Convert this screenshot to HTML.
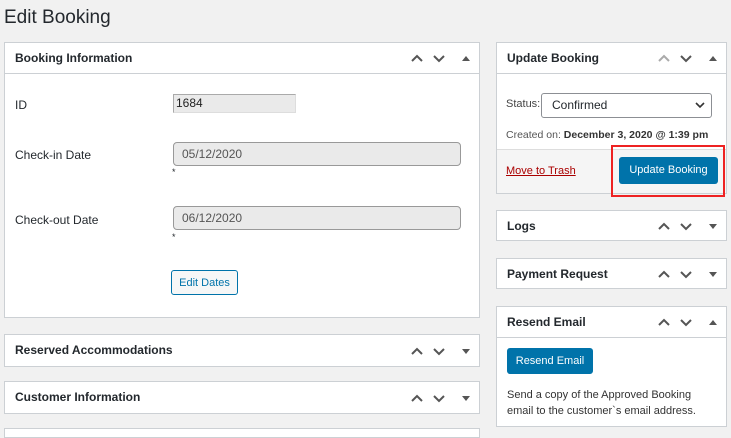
<!DOCTYPE html><html><head><style>
body{margin:0;width:731px;height:430px;background:#f1f1f1;font-family:"Liberation Sans",sans-serif;color:#23282d;position:relative;overflow:hidden;font-size:12px}
.a{position:absolute;white-space:nowrap}
.box{position:absolute;background:#fff;border:1px solid #ccd0d4;box-sizing:border-box}
.hd{position:absolute;left:0;right:0;top:0;height:30px;border-bottom:1px solid #ccd0d4;font-size:12px;font-weight:bold;line-height:30px;padding-left:10px;color:#23282d}
.in{position:absolute;background:#eaeaea;border:1px solid #999;border-radius:4px;box-sizing:border-box;color:#555;padding-left:8px;font-size:12px}
.btn{position:absolute;background:#0073aa;color:#fff;border-radius:3px;text-align:center;font-size:11px}
</style></head><body>
<div class="a" style="left:4px;top:7px;font-size:19px;">Edit Booking</div>

<div class="box" style="left:4px;top:42px;width:476px;height:276px">
<div class="hd">Booking Information</div>
<svg class="a" style="left:405px;top:9px" width="62" height="12"><polyline points="2,9 7,4 12,9" fill="none" stroke="#555" stroke-width="2"/><polyline points="24,4 29,9 34,4" fill="none" stroke="#555" stroke-width="2"/><polygon points="52,9 56,4 60,9" fill="#555"/></svg>
<div class="a" style="left:10px;top:55px">ID</div>
<div class="in" style="left:168px;top:51px;width:123px;height:19px;border-radius:0;color:#222;line-height:17px;padding-left:2px;border-color:#aaa #ddd #ddd #aaa">1684</div>
<div class="a" style="left:10px;top:105px">Check-in Date</div>
<div class="in" style="left:168px;top:99px;width:288px;height:24px;line-height:22px">05/12/2020</div>
<div class="a" style="left:167px;top:124px;font-size:9px">*</div>
<div class="a" style="left:10px;top:170px">Check-out Date</div>
<div class="in" style="left:168px;top:163px;width:288px;height:24px;line-height:22px">06/12/2020</div>
<div class="a" style="left:167px;top:189px;font-size:9px">*</div>
<div class="a" style="left:166px;top:227px;width:67px;height:25px;border:1px solid #0073aa;border-radius:3px;background:#f6f7f7;color:#0073aa;text-align:center;line-height:25px;box-sizing:border-box;font-size:11px">Edit Dates</div>
</div>

<div class="box" style="left:4px;top:334px;width:476px;height:33px"><div class="hd" style="border:0">Reserved Accommodations</div>
<svg class="a" style="left:405px;top:10px" width="62" height="12"><polyline points="2,9 7,4 12,9" fill="none" stroke="#555" stroke-width="2"/><polyline points="24,4 29,9 34,4" fill="none" stroke="#555" stroke-width="2"/><polygon points="52,4 56,9 60,4" fill="#555"/></svg></div>
<div class="box" style="left:4px;top:381px;width:476px;height:33px"><div class="hd" style="border:0">Customer Information</div>
<svg class="a" style="left:405px;top:10px" width="62" height="12"><polyline points="2,9 7,4 12,9" fill="none" stroke="#555" stroke-width="2"/><polyline points="24,4 29,9 34,4" fill="none" stroke="#555" stroke-width="2"/><polygon points="52,4 56,9 60,4" fill="#555"/></svg></div>
<div class="box" style="left:4px;top:428px;width:476px;height:10px"></div>

<div class="box" style="left:496px;top:42px;width:231px;height:152px">
<div class="hd">Update Booking</div>
<svg class="a" style="left:160px;top:9px" width="62" height="12"><polyline points="2,9 7,4 12,9" fill="none" stroke="#aaa" stroke-width="2"/><polyline points="24,4 29,9 34,4" fill="none" stroke="#555" stroke-width="2"/><polygon points="52,9 56,4 60,9" fill="#555"/></svg>
<div class="a" style="left:9px;top:55px;font-size:11px;color:#444">Status:</div>
<div class="a" style="left:44px;top:50px;width:171px;height:25px;border:1px solid #8c8f94;border-radius:3px;box-sizing:border-box;line-height:23px;padding-left:10px;font-size:12px">Confirmed<svg class="a" style="right:6px;top:8px" width="10" height="7"><polyline points="1,1 5,5 9,1" fill="none" stroke="#333" stroke-width="1.6"/></svg></div>
<div class="a" style="left:9px;top:86px;font-size:10.5px;color:#555">Created on: <b style="color:#333">December 3, 2020 @ 1:39 pm</b></div>
<div class="a" style="left:0;right:0;top:106px;bottom:0;background:#f5f5f5;border-top:1px solid #ddd"></div>
<div class="a" style="left:9px;top:122px;color:#a00;text-decoration:underline;font-size:11px">Move to Trash</div>
<div class="btn" style="left:122px;top:114px;width:99px;height:27px;line-height:27px">Update Booking</div>
</div>
<div class="a" style="left:611px;top:145px;width:114px;height:52px;border:2px solid #e22;box-sizing:border-box"></div>

<div class="box" style="left:496px;top:210px;width:231px;height:31px"><div class="hd" style="border:0">Logs</div>
<svg class="a" style="left:160px;top:9px" width="62" height="12"><polyline points="2,9 7,4 12,9" fill="none" stroke="#555" stroke-width="2"/><polyline points="24,4 29,9 34,4" fill="none" stroke="#555" stroke-width="2"/><polygon points="52,4 56,9 60,4" fill="#555"/></svg></div>
<div class="box" style="left:496px;top:258px;width:231px;height:31px"><div class="hd" style="border:0">Payment Request</div>
<svg class="a" style="left:160px;top:9px" width="62" height="12"><polyline points="2,9 7,4 12,9" fill="none" stroke="#555" stroke-width="2"/><polyline points="24,4 29,9 34,4" fill="none" stroke="#555" stroke-width="2"/><polygon points="52,4 56,9 60,4" fill="#555"/></svg></div>
<div class="box" style="left:496px;top:306px;width:231px;height:121px"><div class="hd">Resend Email</div>
<svg class="a" style="left:160px;top:9px" width="62" height="12"><polyline points="2,9 7,4 12,9" fill="none" stroke="#555" stroke-width="2"/><polyline points="24,4 29,9 34,4" fill="none" stroke="#555" stroke-width="2"/><polygon points="52,9 56,4 60,9" fill="#555"/></svg>
<div class="btn" style="left:10px;top:41px;width:86px;height:26px;line-height:26px">Resend Email</div>
<div class="a" style="left:10px;top:80px;font-size:11px;line-height:16px;color:#333;width:200px;white-space:normal">Send a copy of the Approved Booking email to the customer`s email address.</div>
</div>
</body></html>
